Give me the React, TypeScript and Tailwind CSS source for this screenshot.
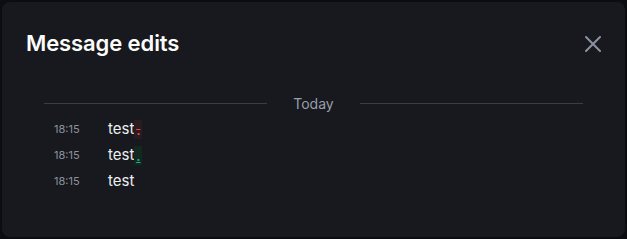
const edits = [
  { time: '18:15', text: 'test', change: 'removed' as const },
  { time: '18:15', text: 'test', change: 'added' as const },
  { time: '18:15', text: 'test', change: null },
];

function CloseIcon() {
  return (
    <svg width="16" height="16" viewBox="0 0 16 16" fill="none" stroke="currentColor" strokeWidth="2" strokeLinecap="round">
      <path d="M1 1L15 15M15 1L1 15" />
    </svg>
  );
}

export default function App() {
  return (
    <div className="w-[627px] h-[239px] bg-[#0c0d10] p-[2px] font-['Inter','Liberation_Sans',sans-serif]">
      <div className="h-[235px] rounded-lg bg-[#17191e] flex flex-col">
        <div className="flex items-center justify-between pl-6 pr-[24px] pt-[27px] h-[55px]">
          <h1 className="text-[22px] leading-[28px] font-semibold text-white tracking-[-0.1px]">Message edits</h1>
          <button className="text-[#8a91a0] mt-[2px]">
            <CloseIcon />
          </button>
        </div>

        <div className="mx-[42px] mt-[36px] flex items-center h-5">
          <div className="flex-1 h-px bg-[#3a3d45]" />
          <span className="px-[26px] text-[14px] text-[#9a9ea8]">Today</span>
          <div className="flex-1 h-px bg-[#3a3d45]" />
        </div>

        <div className="mx-[42px] mt-[3px] flex flex-col">
          {edits.map((edit, i) => (
            <div key={i} className="h-[26px] flex items-center pl-[10px]">
              <span className="w-[54px] text-[11px] text-[#8d919b]">{edit.time}</span>
              <span className="text-[15px] text-[#eceef2] flex items-center">
                {edit.text}
                {edit.change === 'removed' && (
                  <span className="inline-block w-[8px] h-[19px] bg-[#2a1b20] text-[#ef4444] line-through text-center leading-[19px]">.</span>
                )}
                {edit.change === 'added' && (
                  <span className="inline-block w-[8px] h-[19px] bg-[#132821] text-[#10b981] underline text-center leading-[19px]">.</span>
                )}
              </span>
            </div>
          ))}
        </div>
      </div>
    </div>
  );
}
